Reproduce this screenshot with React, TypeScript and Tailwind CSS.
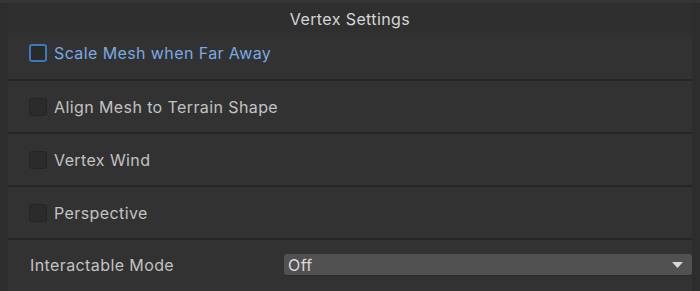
import React from "react";

const font = { fontFamily: "Inter, 'Noto Sans', sans-serif" };

function Checkbox({ focused }: { focused?: boolean }) {
  return (
    <div
      className={
        focused
          ? "w-[18px] h-[18px] rounded-[3px] border-2 border-[#3c78ba] bg-[#2a2a2a]"
          : "w-[18px] h-[18px] rounded-[3px] border border-[#252525] bg-[#2b2b2b]"
      }
    />
  );
}

function ToggleRow({ label, focused }: { label: string; focused?: boolean }) {
  return (
    <div className="flex items-center gap-[7px] pl-[21px] h-full">
      <Checkbox focused={focused} />
      <span
        className={
          focused
            ? "text-[16px] tracking-[0.4px] text-[#7aa9e3]"
            : "text-[16px] tracking-[0.4px] text-[#c2c2c2]"
        }
      >
        {label}
      </span>
    </div>
  );
}

export default function App() {
  return (
    <div className="w-[700px] h-[291px] bg-[#2d2d2d] overflow-hidden flex flex-col" style={font}>
      <div className="h-[3px] bg-[#353535] shrink-0" />
      <div className="flex-1 mx-[8px] bg-[#323232] flex flex-col">
        {/* header */}
        <div className="h-[32px] bg-[#2f2f2f] flex items-center justify-center text-[16px] tracking-[0.4px] text-[#d6d6d6] shrink-0">
          Vertex Settings
        </div>
        <div className="h-[44px] pt-[9px] shrink-0">
          <div className="h-[18px]">
            <ToggleRow label="Scale Mesh when Far Away" focused />
          </div>
        </div>
        <div className="h-[2px] bg-[#262626] shrink-0" />
        <div className="h-[51px] shrink-0">
          <ToggleRow label="Align Mesh to Terrain Shape" />
        </div>
        <div className="h-[2px] bg-[#262626] shrink-0" />
        <div className="h-[51px] shrink-0">
          <ToggleRow label="Vertex Wind" />
        </div>
        <div className="h-[2px] bg-[#262626] shrink-0" />
        <div className="h-[51px] shrink-0">
          <ToggleRow label="Perspective" />
        </div>
        <div className="h-[2px] bg-[#262626] shrink-0" />
        <div className="flex items-center pt-[13px] shrink-0">
          <span className="pl-[22px] w-[276px] text-[16px] tracking-[0.4px] text-[#c2c2c2]">Interactable Mode</span>
          <div className="flex-1 h-[22px] rounded-[3px] bg-[#515151] border-b border-[#2a2a2a] flex items-center justify-between pl-[4px] pr-[9px]">
            <span className="text-[16px] tracking-[0.4px] text-[#dadada]">Off</span>
            <svg width="11" height="6" viewBox="0 0 11 6">
              <path d="M0 0 H11 L5.5 6 Z" fill="#d8d8d8" />
            </svg>
          </div>
        </div>
      </div>
    </div>
  );
}
